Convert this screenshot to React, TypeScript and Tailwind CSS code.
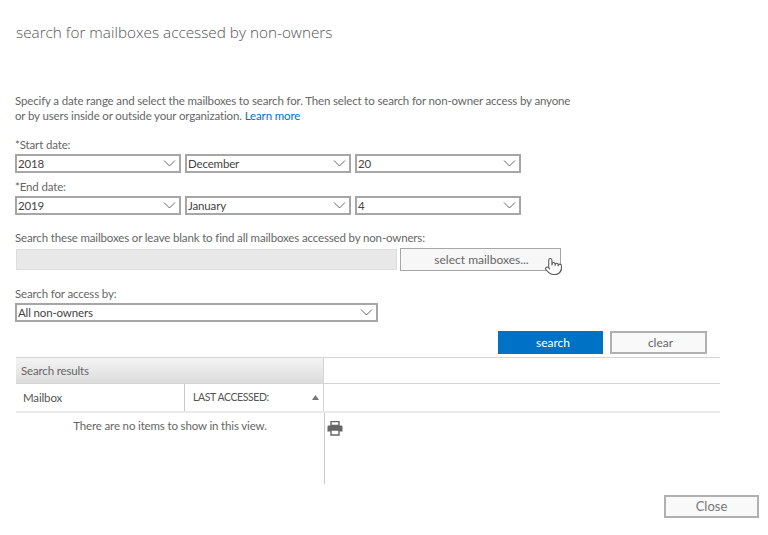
import { Pointer } from 'lucide-react';

const FONT = "font-['Lato',sans-serif]";

function Select({ value, width }: { value: string; width: string }) {
  return (
    <div className={`flex h-[19px] items-center justify-between border-2 border-[#a6a6a6] bg-white pl-[1px] pr-[2px] text-[11.5px] tracking-[-0.15px] text-[#444] ${width}`}>
      <span className="pt-[1px]">{value}</span>
      <svg width="13" height="7" viewBox="0 0 13 7" fill="none" stroke="#666" strokeWidth="1" className="mr-[1px]">
        <path d="M1 .5 6.5 6 12 .5" />
      </svg>
    </div>
  );
}

function DateRow({ year, month, day }: { year: string; month: string; day: string }) {
  return (
    <div className="flex gap-[4px]">
      <Select value={year} width="w-[166px]" />
      <Select value={month} width="w-[166px]" />
      <Select value={day} width="w-[166px]" />
    </div>
  );
}

function PrinterIcon() {
  return (
    <svg width="16" height="15" viewBox="0 0 16 15">
      <path d="M4 .5h8v4H4z" fill="#fff" stroke="#666" strokeWidth="1.4" />
      <path d="M1.5 4.5h13a1 1 0 0 1 1 1v5h-15v-5a1 1 0 0 1 1-1z" fill="#666" />
      <path d="M4 9h8v5H4z" fill="#fff" stroke="#666" strokeWidth="1.4" />
    </svg>
  );
}

export default function App() {
  return (
    <div className={`${FONT} h-[535px] w-[768px] overflow-hidden bg-white text-[#666]`}>
      <div className="pl-[16px] pt-[22px]">
        <h1 className="font-['Open_Sans',sans-serif] text-[15.3px] font-light leading-[20px] text-[#555]">search for mailboxes accessed by non-owners</h1>
      </div>

      <div className="pl-[15px] pt-[51px]">
        <div className="text-[11.5px] leading-[15px] tracking-[-0.15px]">
          <div>Specify a date range and select the mailboxes to search for. Then select to search for non-owner access by anyone</div>
          <div className="flex gap-[3px]">
            <span>or by users inside or outside your organization.</span>
            <span className="text-[#0072c6]">Learn more</span>
          </div>
        </div>

        <div className="mt-[14px] text-[11.5px] leading-[15px] tracking-[-0.15px]">*Start date:</div>
        <div className="mt-[2px]"><DateRow year="2018" month="December" day="20" /></div>
        <div className="mt-[6px] text-[11.5px] leading-[15px] tracking-[-0.15px]">*End date:</div>
        <div className="mt-[2px]"><DateRow year="2019" month="January" day="4" /></div>

        <div className="mt-[15px] text-[11.5px] leading-[15px] tracking-[-0.15px]">Search these mailboxes or leave blank to find all mailboxes accessed by non-owners:</div>
        <div className="mt-[3px] flex items-center gap-[3px]">
          <div className="ml-[1px] h-[21px] w-[381px] border border-[#dcdcdc] bg-[#e8e8e8]" />
          <div className="relative flex h-[23px] w-[161px] items-center justify-center border border-[#a6a6a6] bg-[#f7f7f7] pl-[2px] text-[12px]">
            select mailboxes...
            <Pointer size={19} strokeWidth={1.3} color="#555" fill="#fff" className="absolute left-[143px] top-[8px]" />
          </div>
        </div>

        <div className="mt-[15px] text-[11.5px] leading-[15px] tracking-[-0.15px]">Search for access by:</div>
        <div className="mt-[2px]"><Select value="All non-owners" width="w-[363px]" /></div>
      </div>

      <div className="ml-[498px] mt-[9px] flex gap-[7px] text-[12px]">
        <div className="flex h-[23px] w-[105px] items-center justify-center bg-[#0072c6] pl-[5px] text-white">search</div>
        <div className="flex h-[23px] w-[97px] items-center justify-center border-2 border-[#b0b0b0] bg-[#f9f9f9] pl-[4px] text-[#666]">clear</div>
      </div>

      <div className="ml-[16px] mt-[3px] w-[704px] border-t border-[#d4d4d4] text-[11.5px] tracking-[-0.15px]">
        <div className="flex h-[26px] border-b border-[#d4d4d4]">
          <div className="flex w-[307px] items-center bg-gradient-to-b from-[#f4f4f4] to-[#dcdcdc] pl-[5px] text-[#666]">Search results</div>
          <div className="flex-1 border-l border-[#d4d4d4]" />
        </div>
        <div className="flex h-[29px] border-b-2 border-[#ebebeb]">
          <div className="flex w-[169px] items-center border-r border-[#c8c8c8] pl-[7px] text-[#555]">Mailbox</div>
          <div className="flex w-[138px] items-center justify-between pl-[8px] pr-[4px] text-[10.5px] tracking-[-0.4px] text-[#555]">
            LAST ACCESSED:
            <svg width="7" height="5" viewBox="0 0 7 5"><path d="M3.500 0 7 5H0z" fill="#777" /></svg>
          </div>
          <div className="flex-1 border-l border-[#d4d4d4]" />
        </div>
        <div className="flex h-[71px]">
          <div className="w-[308px] pt-[5px] text-center leading-[15px] text-[#666]">There are no items to show in this view.</div>
          <div className="flex-1 border-l border-[#c8c8c8] pl-[2px] pt-[8px]"><PrinterIcon /></div>
        </div>
      </div>

      <div className="ml-[664px] mt-[11px] flex h-[23px] w-[95px] items-center justify-center border-2 border-[#b0b0b0] bg-[#f9f9f9] text-[13px] text-[#777]">Close</div>
    </div>
  );
}
